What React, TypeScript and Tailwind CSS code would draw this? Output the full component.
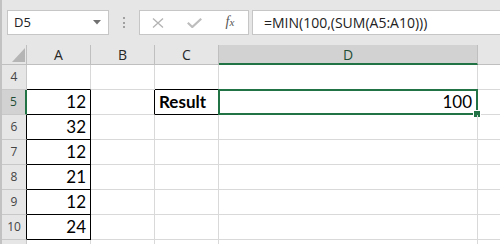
import React from "react"

type Row = {
  n: number
  a?: string
  c?: string
  d?: string
}

const rows: Row[] = [
  { n: 4 },
  { n: 5, a: "12", c: "Result", d: "100" },
  { n: 6, a: "32" },
  { n: 7, a: "12" },
  { n: 8, a: "21" },
  { n: 9, a: "12" },
  { n: 10, a: "24" },
  { n: 11 },
]

const ui = { fontFamily: '"Open Sans", "Liberation Sans", sans-serif' }
const cell = { fontFamily: 'Lato, "Liberation Sans", sans-serif' }

const TopBar = () => (
  <div className="h-[45px] bg-[#e6e6e6] flex items-start pt-[10px] pl-[5px]" style={ui}>
    {/* name box */}
    <div className="w-[102px] h-[25px] bg-white border border-[#c6c6c6] flex items-center justify-between pl-[6px] pr-[7px]">
      <span className="text-[13px] text-[#222]">D5</span>
      <svg width="8" height="5" viewBox="0 0 8 5">
        <polygon points="0,0 8,0 4,4.5" fill="#707070" />
      </svg>
    </div>

    <div className="w-[30px] h-[25px] flex flex-col items-center justify-center gap-[2.5px]">
      <span className="w-[2px] h-[2px] bg-[#a0a0a0]" />
      <span className="w-[2px] h-[2px] bg-[#a0a0a0]" />
      <span className="w-[2px] h-[2px] bg-[#a0a0a0]" />
    </div>

    {/* cancel / enter / fx */}
    <div className="w-[110px] h-[25px] bg-white border border-[#c6c6c6] flex items-center">
      <div className="flex-1 flex justify-center">
        <svg width="12" height="10" viewBox="0 0 12 10">
          <path d="M1 0.5 L11 9.5 M11 0.5 L1 9.5" stroke="#b3b3b3" strokeWidth="1.3" fill="none" />
        </svg>
      </div>
      <div className="flex-1 flex justify-center">
        <svg width="15" height="10" viewBox="0 0 15 10">
          <path d="M0.8 4.8 L5.3 9 L14.2 0.8" stroke="#bdbdbd" strokeWidth="2.2" fill="none" />
        </svg>
      </div>
      <div className="flex-1 flex justify-center">
        <span
          className="text-[14px] italic text-[#555] leading-none -mt-[2px]"
          style={{ fontFamily: '"Liberation Serif", serif' }}
        >
          f<span className="text-[11px]">x</span>
        </span>
      </div>
    </div>

    {/* formula */}
    <div className="flex-1 ml-[3px] h-[25px] bg-white border border-r-0 border-[#c6c6c6] flex items-center pl-[11px]">
      <span className="text-[14px] text-[#222] whitespace-nowrap">=MIN(100,(SUM(A5:A10)))</span>
    </div>
  </div>
)

const HeaderRow = () => (
  <div className="h-[20px] flex bg-[#e6e6e6] text-[14px] text-[#262626]" style={ui}>
    <div className="relative w-[25px] h-full border-r border-b border-[#bfbfbf]">
      <svg className="absolute right-[1px] bottom-[2px]" width="13" height="14" viewBox="0 0 13 14">
        <polygon points="13,0 13,14 0,14" fill="#b5b5b5" />
      </svg>
    </div>
    <div className="w-[64px] h-full border-r border-b border-[#bfbfbf] flex items-center justify-center">A</div>
    <div className="w-[64px] h-full border-r border-b border-[#bfbfbf] flex items-center justify-center">B</div>
    <div className="w-[64px] h-full border-r border-b border-[#bfbfbf] flex items-center justify-center">C</div>
    <div className="w-[259px] h-full bg-[#d2d2d2] border-r border-[#bfbfbf] border-b-2 border-b-[#217346] flex items-center justify-center text-[#1f4e36]">
      D
    </div>
    <div className="flex-1 h-full border-b border-[#bfbfbf]" />
  </div>
)

const BodyRow = ({ row }: { row: Row }) => {
  const inA = row.n >= 5 && row.n <= 10
  const sel = row.n === 5

  return (
    <div className="h-[25px] flex">
      <div
        className={
          sel
            ? "w-[25px] h-full bg-[#d2d2d2] border-b border-[#c8c8c8] border-r-2 border-r-[#217346] flex items-center justify-center text-[12px] text-[#1f4e36]"
            : inA
              ? "w-[25px] h-full bg-[#e6e6e6] border-b border-[#c8c8c8] border-r border-r-black flex items-center justify-center text-[12px] text-[#444]"
              : "w-[25px] h-full bg-[#e6e6e6] border-b border-r border-[#c8c8c8] flex items-center justify-center text-[12px] text-[#444]"
        }
        style={ui}
      >
        {/* row 11 is only a sliver at the bottom edge, its number is not visible */}
        {row.n <= 10 ? row.n : null}
      </div>

      {/* A */}
      <div
        className={
          inA
            ? "w-[64px] h-full border-r border-b border-black flex items-center justify-end pr-[4px] text-[17px] text-black"
            : row.n === 4
              ? "w-[64px] h-full border-r border-[#d9d9d9] border-b border-b-black"
              : "w-[64px] h-full border-r border-b border-[#d9d9d9]"
        }
        style={cell}
      >
        {row.a}
      </div>

      {/* B */}
      <div
        className={
          sel
            ? "w-[64px] h-full border-b border-[#d9d9d9] border-r border-r-black"
            : "w-[64px] h-full border-r border-b border-[#d9d9d9]"
        }
      />

      {/* C */}
      <div
        className={
          sel
            ? "w-[64px] h-full border-r border-b border-black flex items-center pl-[4px] text-[17px] font-bold text-black"
            : row.n === 4
              ? "w-[64px] h-full border-r border-[#d9d9d9] border-b border-b-black"
              : "w-[64px] h-full border-r border-b border-[#d9d9d9]"
        }
        style={cell}
      >
        {row.c}
      </div>

      {/* D */}
      <div
        className="relative w-[259px] h-full border-r border-b border-[#d9d9d9] flex items-center justify-end pr-[5px] text-[17px] text-black"
        style={cell}
      >
        {row.d}
        {sel && (
          <div className="absolute -top-[1px] -left-[1px] -right-[1px] -bottom-[1px] border-2 border-[#217346]">
            <div className="absolute -right-[4px] -bottom-[4px] w-[6px] h-[6px] bg-[#217346] outline outline-1 outline-white" />
          </div>
        )}
      </div>

      {/* E */}
      <div className="flex-1 h-full border-b border-[#d9d9d9]" />
    </div>
  )
}

export default function App() {
  return (
    <div className="w-[500px] h-[244px] overflow-hidden bg-white border-l-2 border-[#c2c2c2]">
      <TopBar />
      <HeaderRow />
      {rows.map((r) => (
        <BodyRow key={r.n} row={r} />
      ))}
    </div>
  )
}
